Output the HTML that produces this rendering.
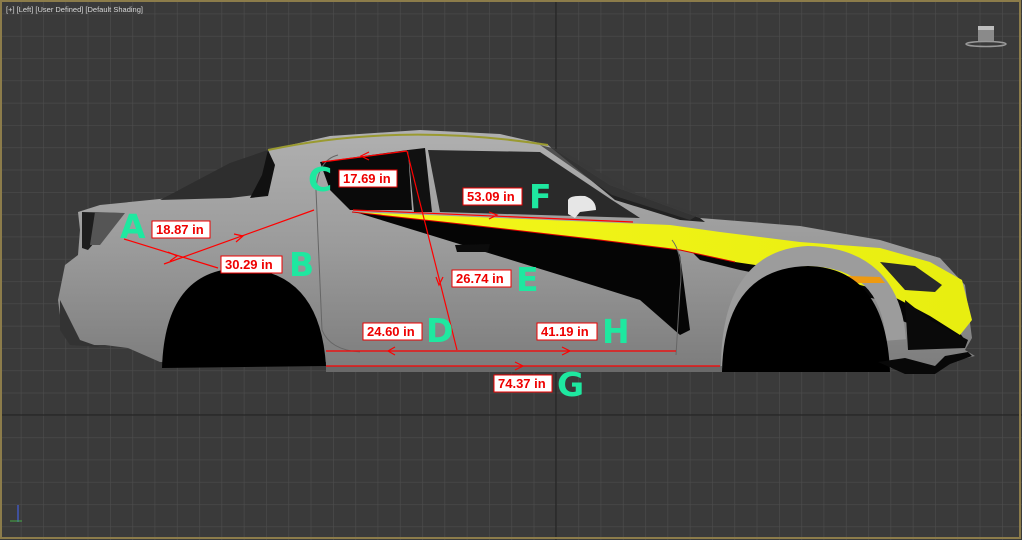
<!DOCTYPE html>
<html><head><meta charset="utf-8"><style>
html,body{margin:0;padding:0;background:#3a3a3a;width:1022px;height:540px;overflow:hidden}
svg{display:block}
.lb{font-family:"Liberation Sans",sans-serif;font-weight:bold;font-size:13px;fill:#e00}
.gl{font-family:"DejaVu Sans","Liberation Sans",sans-serif;font-weight:bold;font-size:33px;fill:#1ee8a0}
</style></head><body>
<svg width="1022" height="540" viewBox="0 0 1022 540" xmlns="http://www.w3.org/2000/svg">
<defs>
<pattern id="g" x="556" y="415" width="22.3" height="22.3" patternUnits="userSpaceOnUse">
<path d="M0 0H22.3M0 0V22.3" stroke="#4c4c4c" stroke-width="1.3" fill="none"/>
</pattern>
<linearGradient id="body" x1="0" y1="0" x2="0" y2="1">
<stop offset="0" stop-color="#b0b0b0"/><stop offset="0.5" stop-color="#9a9a9a"/><stop offset="1" stop-color="#7c7c7c"/>
</linearGradient>
<linearGradient id="yel" x1="0" y1="0" x2="1" y2="0">
<stop offset="0" stop-color="#f4f61a"/><stop offset="1" stop-color="#e8ee10"/>
</linearGradient>
</defs>
<rect width="1022" height="540" fill="#3a3a3a"/>
<rect width="1022" height="540" fill="url(#g)"/>
<line x1="556" y1="0" x2="556" y2="540" stroke="#252525" stroke-width="1.3"/>
<line x1="0" y1="415" x2="1022" y2="415" stroke="#252525" stroke-width="1.3"/>
<rect x="1" y="1" width="1019" height="537" fill="none" stroke="#8c7c4a" stroke-width="2"/>
<text x="6" y="12" font-family="Liberation Sans,sans-serif" font-size="7.5" fill="#d8d8d8">[+] [Left] [User Defined] [Default Shading]</text>
<rect x="978" y="26" width="16" height="16" fill="#8a8a8a"/><rect x="978" y="26" width="16" height="4" fill="#bdbdbd"/>
<ellipse cx="986" cy="44" rx="20" ry="2.5" fill="none" stroke="#9a9a9a" stroke-width="1.5"/>
<line x1="18" y1="505" x2="18" y2="522" stroke="#4466ff"/><line x1="10" y1="521" x2="22" y2="521" stroke="#44aa44"/>
<path d="M78 212 L100 205 L190 196 L230 170 L268 150 L330 136 L420 130 L500 134 L548 145 L610 185 L700 218 L800 226 L880 240 L940 258 L965 285 L972 338 L965 350 L975 356 L950 362 L935 372 L905 372 L880 365 L720 372 L326 372 L326 362 L160 362 L128 348 L105 345 L78 345 L62 330 L58 300 L65 265 L78 255 L80 230 Z" fill="url(#body)"/>
<path d="M60 300 L70 320 L80 340 L100 347 L70 345 L60 330 Z" fill="#333"/>
<path d="M82 212 L120 213 L88 250 L82 248 Z" fill="#1e1e1e"/>
<path d="M95 212 L125 213 L100 245 L90 245 Z" fill="#555"/>
<path d="M160 200 L230 163 L268 150 L265 170 L255 195 L230 198 Z" fill="#2e2e2e"/>
<path d="M268 150 L262 175 L250 198 L268 196 L275 165 Z" fill="#111"/>
<path d="M320 162 L408 150 L412 210 L350 210 L330 190 Z" fill="#0a0a0a"/>
<path d="M408 150 L425 148 L432 212 L414 212 Z" fill="#111"/>
<path d="M428 150 L540 152 L612 200 L640 218 L440 212 Z" fill="#2a2a2a"/>
<path d="M548 145 L610 185 L700 218 L705 222 L680 220 L615 200 L560 155 Z" fill="#222"/>
<path d="M540 145 L560 150 L640 195 L700 214 L690 220 L612 195 Z" fill="#3a3a3a" opacity="0.8"/>
<path d="M568 200 Q570 195 585 196 Q596 200 596 210 L580 212 L575 218 L568 214 Z" fill="#e6e6e6"/>
<path d="M268 150 Q400 122 548 145" fill="none" stroke="#9a9a30" stroke-width="2"/>
<path d="M355 212 L450 222 L600 235 L670 240 L680 255 L690 330 L680 335 L640 300 L560 275 L430 235 Z" fill="#050505"/>
<path d="M680 240 L760 262 L860 280 L900 295 L950 320 L965 340 L945 338 L900 320 L880 300 L800 282 L740 270 L700 260 Z" fill="#060606"/>
<path d="M352 212 L500 218 L670 225 L720 232 L800 242 L880 248 L930 262 L962 280 L972 320 L960 335 L930 316 L900 300 L880 290 L860 285 L790 270 L735 262 L680 250 L600 240 L470 225 Z" fill="url(#yel)"/>
<path d="M352 212 L470 225 L600 240 L680 250 L735 262" fill="none" stroke="#d00" stroke-width="1"/>
<!-- front fender ring -->
<path d="M731 368 Q731 260 808 256 Q890 258 896 340" fill="none" stroke="#9c9c9c" stroke-width="20"/>
<path d="M880 262 L915 266 L942 285 L935 292 L905 290 Z" fill="#2a2a2a"/>
<path d="M848 276 L880 277 L885 283 L852 283 Z" fill="#ee9a10"/>
<path d="M905 300 L930 320 L968 340 L965 348 L908 350 Z" fill="#0a0a0a"/>
<path d="M455 245 L490 244 L488 252 L457 252 Z" fill="#0c0c0c"/>
<path d="M338 155 Q318 160 316 190 L322 330 Q330 350 360 352" fill="none" stroke="#666" stroke-width="1"/>
<path d="M672 240 Q684 255 680 290 L676 355" fill="none" stroke="#666" stroke-width="1"/>
<path d="M162 368 Q165 270 240 268 Q320 270 326 366 Z" fill="#000"/>
<path d="M722 372 Q724 268 808 266 Q886 268 890 372 Z" fill="#000"/>
<path d="M878 362 L905 358 L935 366 L945 356 L968 352 L972 356 L950 364 L935 374 L905 374 Z" fill="#080808"/>
<rect x="326" y="366" width="396" height="6" fill="#6a6a6a"/>
<g stroke="#f00" stroke-width="1.2" fill="none">
<line x1="124" y1="239" x2="218" y2="268"/>
<line x1="164" y1="264" x2="314" y2="210"/>
<line x1="322" y1="162" x2="407" y2="151"/>
<line x1="407" y1="151" x2="457" y2="350"/>
<line x1="353" y1="210" x2="633" y2="222"/>
<line x1="326" y1="351" x2="676" y2="351"/>
<line x1="326" y1="366" x2="720" y2="366"/>
<path d="M168 252 L177 256 L170 261"/>
<path d="M234 234 L243 236 L236 242"/>
<path d="M369 152 L361 156 L369 160"/>
<path d="M436 277 L439 285 L443 277"/>
<path d="M489 212 L497 215 L489 219"/>
<path d="M395 347 L388 351 L395 355"/>
<path d="M562 347 L570 351 L562 355"/>
<path d="M515 362 L523 366 L515 370"/>
</g>
<g stroke="#e00" stroke-width="1" fill="#fff">
<rect x="152" y="221" width="58" height="17"/>
<rect x="221" y="256" width="61" height="17"/>
<rect x="339" y="170" width="58" height="17"/>
<rect x="463" y="188" width="59" height="17"/>
<rect x="452" y="270" width="59" height="17"/>
<rect x="363" y="323" width="59" height="17"/>
<rect x="537" y="323" width="60" height="17"/>
<rect x="494" y="375" width="58" height="17"/>
</g>
<text class="lb" x="156" y="234">18.87 in</text>
<text class="lb" x="225" y="269">30.29 in</text>
<text class="lb" x="343" y="183">17.69 in</text>
<text class="lb" x="467" y="201">53.09 in</text>
<text class="lb" x="456" y="283">26.74 in</text>
<text class="lb" x="367" y="336">24.60 in</text>
<text class="lb" x="541" y="336">41.19 in</text>
<text class="lb" x="498" y="388">74.37 in</text>
<text class="gl" x="120" y="238">A</text>
<text class="gl" x="289" y="276">B</text>
<text class="gl" x="308" y="191">C</text>
<text class="gl" x="426" y="342">D</text>
<text class="gl" x="516" y="291">E</text>
<text class="gl" x="529" y="208">F</text>
<text class="gl" x="557" y="396">G</text>
<text class="gl" x="602" y="343">H</text>
</svg>
</body></html>
